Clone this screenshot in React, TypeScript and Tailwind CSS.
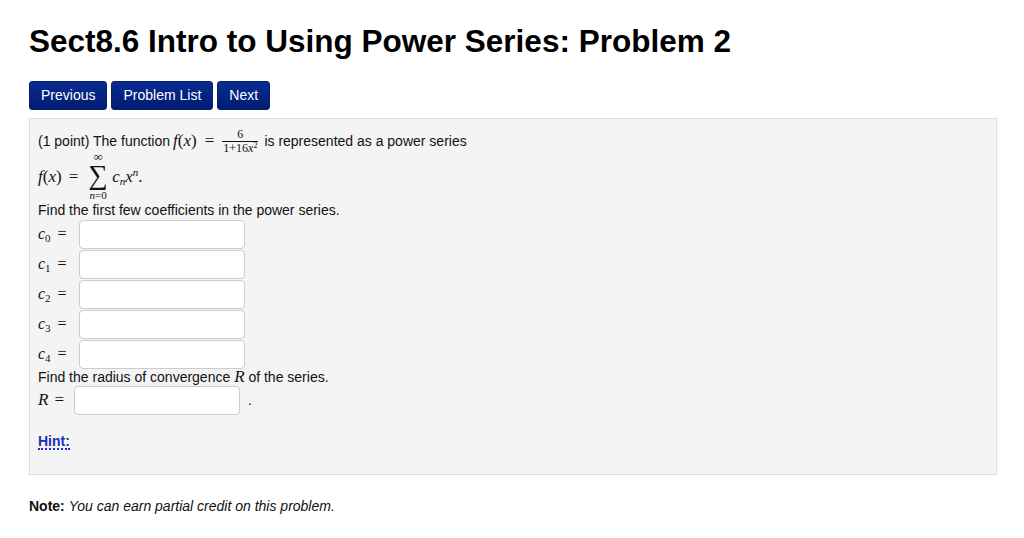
import * as React from "react"

const sans = { fontFamily: '"Liberation Sans", Arial, sans-serif' }
const serif = { fontFamily: '"Liberation Serif", "Times New Roman", serif' }

const Coef: React.FC<{ i: number }> = ({ i }) => (
  <div className="flex items-center h-[30px]">
    <span className="w-[41px] text-[16px] text-[#111]" style={serif}>
      <i>c</i>
      <sub className="text-[11px] not-italic">{i}</sub>
      <span className="ml-[7px]">=</span>
    </span>
    <input
      type="text"
      className="w-[166px] h-[29px] bg-white border border-[#cccccc] rounded-[4px] outline-none"
    />
  </div>
)

export default function App() {
  const buttons = ["Previous", "Problem List", "Next"]

  return (
    <div className="bg-white w-[1024px] h-[538px] pl-[29px] pr-[27px]" style={sans}>
      <h1 className="pt-[24px] text-[31.5px] font-bold leading-[34px] text-black">
        Sect8.6 Intro to Using Power Series: Problem 2
      </h1>

      <div className="flex gap-[4px] mt-[23px]">
        {buttons.map(b => (
          <button
            key={b}
            className="h-[29px] px-[11px] text-[14px] text-white rounded-[3px] border border-[#0a1f66] bg-gradient-to-b from-[#0b2c92] to-[#001c72]"
          >
            {b}
          </button>
        ))}
      </div>

      <div className="mt-[8px] h-[357px] bg-[#f4f4f4] border border-[#dedede] pl-[8px] pt-[10px] text-[14px] text-[#111]">
        <div className="flex items-center h-[24px]">
          <span>(1 point) The function</span>
          <span className="text-[17px] ml-[3px]" style={serif}>
            <i>f</i>(<i>x</i>)<span className="ml-[8px]">=</span>
          </span>
          <span
            className="inline-flex flex-col items-center ml-[8px] mr-[6px] text-[12px] leading-[11px]"
            style={serif}
          >
            <span className="px-[2px] w-full text-center border-b border-[#111] pb-[1px]">6</span>
            <span className="px-[1px] pt-[1px]">
              1+16<i>x</i>
              <sup className="text-[8px]">2</sup>
            </span>
          </span>
          <span>is represented as a power series</span>
        </div>

        <div className="flex items-center h-[46px] text-[17px]" style={serif}>
          <span className="mt-[1px]">
            <i>f</i>(<i>x</i>)<span className="ml-[7px]">=</span>
          </span>
          <span className="inline-flex flex-col items-center gap-[2px] ml-[10px] mr-[4px] w-[20px]">
            <span className="text-[13px] leading-[9px] h-[9px]">∞</span>
            <span className="text-[27px] leading-[25px] h-[25px]">∑</span>
            <span className="text-[11px] leading-[10px] h-[10px] whitespace-nowrap">
              <i>n</i>=0
            </span>
          </span>
          <span className="mt-[1px]">
            <i>c</i>
            <sub className="text-[11px]"><i>n</i></sub>
            <i>x</i>
            <sup className="text-[11px]"><i>n</i></sup>.
          </span>
        </div>

        <p className="mt-[2px] leading-[18px]">Find the first few coefficients in the power series.</p>

        <div className="flex flex-col">
          {[0, 1, 2, 3, 4].map(i => (
            <Coef key={i} i={i} />
          ))}
        </div>

        <p className="leading-[16px]">
          Find the radius of convergence{" "}
          <i className="text-[17px]" style={serif}>R</i> of the series.
        </p>

        <div className="flex items-center h-[30px]">
          <span className="w-[36px] text-[17px]" style={serif}>
            <i>R</i>
            <span className="ml-[6px]">=</span>
          </span>
          <input
            type="text"
            className="w-[166px] h-[29px] bg-white border border-[#cccccc] rounded-[4px] outline-none"
          />
          <span className="ml-[8px]">.</span>
        </div>

        <div className="mt-[16px]">
          <span className="font-bold text-[#1c30b4] border-b-2 border-dotted border-[#1c30b4] leading-[14px] inline-block">
            Hint:
          </span>
        </div>
      </div>

      <p className="mt-[21px] text-[14px] leading-[20px] text-[#111]">
        <b>Note:</b> <i>You can earn partial credit on this problem.</i>
      </p>
    </div>
  )
}
